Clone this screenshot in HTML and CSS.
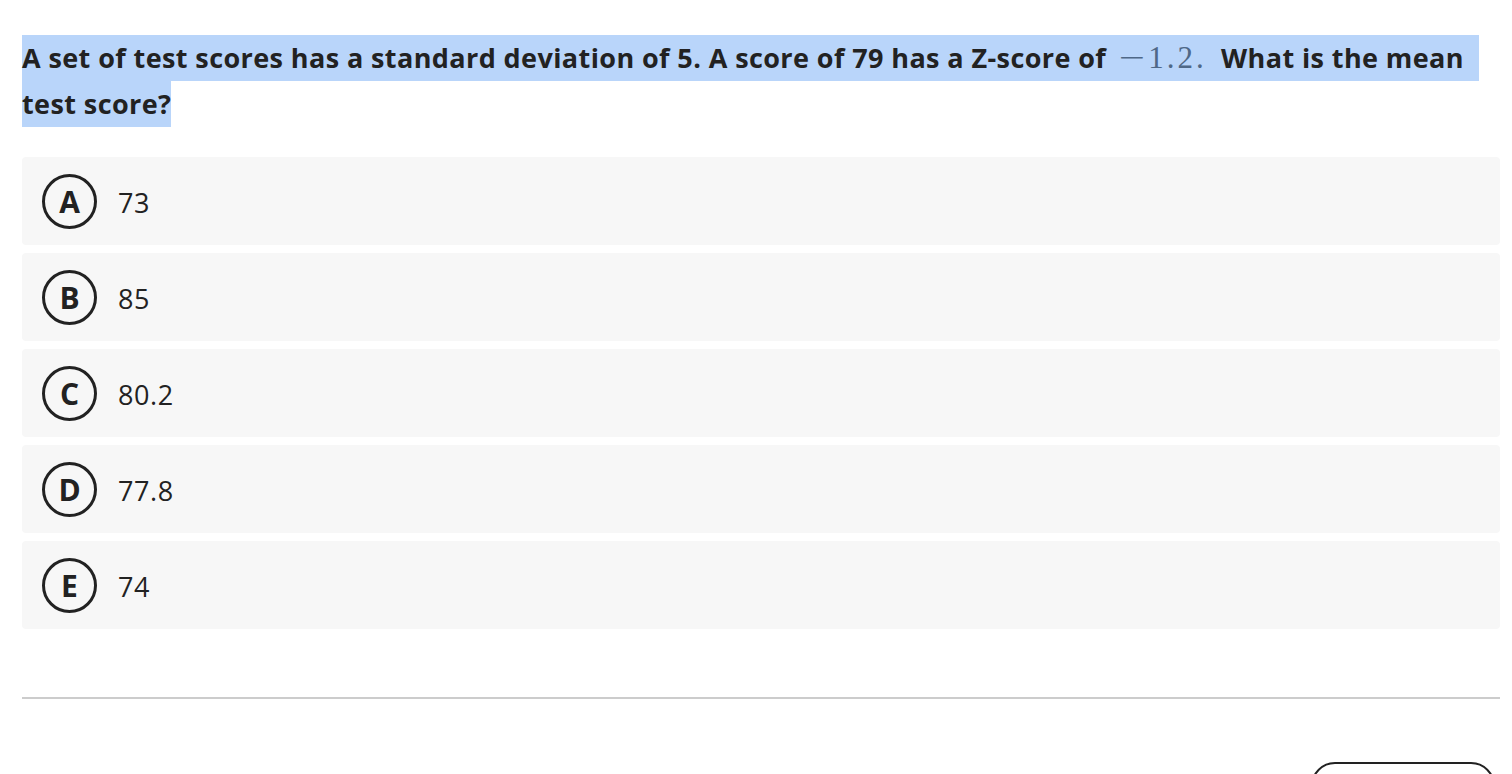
FILE: index.html
```html
<!DOCTYPE html>
<html lang="en">
<head>
<meta charset="utf-8">
<title>Question</title>
<link rel="stylesheet" href="styles.css">
</head>
<body>
<main class="quiz">
  <p class="prompt"><span class="hl">A set of test scores has a standard deviation of 5. A score of 79 has a Z-score of <span class="math"><span class="minus">−</span>1<span class="pt">.</span>2<span class="pt end">.</span></span> What is the mean&nbsp;&nbsp;</span><br><span class="hl">test score?</span></p>

  <ul class="choices">
    <li class="choice"><span class="badge">A</span><span class="answer">73</span></li>
    <li class="choice"><span class="badge">B</span><span class="answer">85</span></li>
    <li class="choice"><span class="badge">C</span><span class="answer">80.2</span></li>
    <li class="choice"><span class="badge">D</span><span class="answer">77.8</span></li>
    <li class="choice"><span class="badge">E</span><span class="answer">74</span></li>
  </ul>

  <hr class="rule">

  <div class="actions">
    <button class="next" type="button"></button>
  </div>
</main>
</body>
</html>
```

FILE: styles.css
```css
html, body {
  margin: 0;
  padding: 0;
  background: #ffffff;
  overflow: hidden;
}

body {
  font-family: "Open Sans", "Noto Sans", sans-serif;
  color: #222222;
}

.quiz {
  width: 1478px;
  padding: 35px 0 0 22px;
}

.prompt {
  margin: 0;
  font-size: 27px;
  font-weight: 700;
  letter-spacing: 0.4px;
  line-height: 46px;
  color: #222222;
}

.hl {
  background: #b9d5fa;
  padding: 4px 0 5px;
}

.math {
  font-family: "Liberation Serif", "DejaVu Serif", serif;
  font-weight: 400;
  font-size: 31px;
  letter-spacing: 0;
  line-height: 1;
  color: #4f6887;
}

.minus {
  display: inline-block;
  transform: scaleX(1.5);
  margin: 0 8px 0 9px;
}

.pt {
  margin: 0 3px;
}

.pt.end {
  margin-right: 10px;
}

.choices {
  list-style: none;
  margin: 30px 0 0;
  padding: 0;
  display: flex;
  flex-direction: column;
  gap: 8px;
}

.choice {
  height: 88px;
  box-sizing: border-box;
  display: flex;
  align-items: center;
  padding: 0 20px;
  background: #f7f7f7;
  border-radius: 4px;
}

.badge {
  width: 55px;
  height: 55px;
  box-sizing: border-box;
  border: 3px solid #222222;
  border-radius: 50%;
  display: flex;
  align-items: center;
  justify-content: center;
  font-size: 30px;
  font-weight: 700;
  line-height: 1;
  flex-shrink: 0;
  margin-top: 1px;
}

.answer {
  margin-left: 21px;
  font-size: 27px;
  font-weight: 400;
  letter-spacing: 0.6px;
  color: #222222;
  margin-top: 2px;
}

.rule {
  margin: 68px 0 0;
  border: 0;
  height: 2px;
  background: #cccccc;
}

.actions {
  display: flex;
  justify-content: flex-end;
  padding: 63px 5px 0 0;
}

.next {
  width: 184px;
  height: 48px;
  border: 2px solid #222222;
  border-radius: 24px;
  background: #ffffff;
}
```
